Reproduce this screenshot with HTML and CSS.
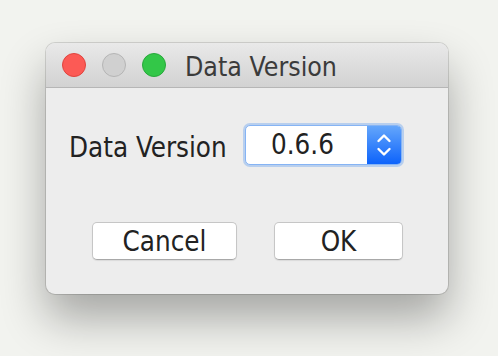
FILE: index.html
```html
<!DOCTYPE html>
<html lang="en">
<head>
  <meta charset="UTF-8" />
  <title>Data Version</title>
  <link rel="stylesheet" href="styles.css">
</head>
<body>
  <div class="window">
    <div class="titlebar">
      <span class="light red"></span>
      <span class="light gray"></span>
      <span class="light green"></span>
      <span class="title">Data Version</span>
    </div>
    <div class="content">
      <div class="row">
        <label class="field-label">Data Version</label>
        <div class="select">
          <span class="select-value">0.6.6</span>
          <span class="stepper">
            <svg width="18" height="28" viewBox="0 0 18 28">
              <path d="M3.5 10 L9 4.5 L14.5 10" fill="none" stroke="#fff" stroke-width="2.4" stroke-linecap="round" stroke-linejoin="round"/>
              <path d="M3.5 18 L9 23.5 L14.5 18" fill="none" stroke="#fff" stroke-width="2.4" stroke-linecap="round" stroke-linejoin="round"/>
            </svg>
          </span>
        </div>
      </div>
      <div class="buttons">
        <button class="btn cancel">Cancel</button>
        <button class="btn ok">OK</button>
      </div>
    </div>
  </div>
</body>
</html>
```

FILE: styles.css
```css
body {
  margin: 0;
  height: 356px;
  background: #f2f3ef;
  font-family: 'DejaVu Sans Condensed', 'DejaVu Sans', sans-serif;
  color: #222;
  overflow: hidden;
}

.window {
  margin: 43px 0 0 46px;
  width: 402px;
  height: 251px;
  background: #ededed;
  border-radius: 9px;
  box-shadow: 0 0 0 1px rgba(0,0,0,0.13), 0 24px 45px rgba(0,0,0,0.32);
  overflow: hidden;
  display: flex;
  flex-direction: column;
}

.titlebar {
  height: 45px;
  background: linear-gradient(#e9e9e9, #d2d2d2);
  border-bottom: 1px solid #b6b6b6;
  display: flex;
  align-items: center;
  padding-left: 16px;
  box-sizing: border-box;
}

.light {
  width: 24px;
  height: 24px;
  border-radius: 50%;
  margin-right: 16px;
  box-sizing: border-box;
}

.red {
  background: #fc5a55;
  border: 1px solid #e0443e;
}

.gray {
  background: #d0d0d0;
  border: 1px solid #b5b5b5;
}

.green {
  background: #33c748;
  border: 1px solid #28a83b;
}

.title {
  margin-left: 3px;
  padding-top: 3px;
  font-size: 26.5px;
  color: #3b3b3b;
}

.content {
  flex: 1;
  padding: 37px 0 0 23px;
}

.row {
  display: flex;
  align-items: flex-start;
}

.field-label {
  font-size: 27.5px;
  line-height: 40px;
  margin-top: 2px;
  width: 176px;
}

.select {
  width: 157px;
  height: 40px;
  box-sizing: border-box;
  border: 1px solid #86b4f4;
  box-shadow: 0 0 0 2px rgba(120,170,240,0.45);
  border-radius: 5px;
  background: #fff;
  display: flex;
  overflow: hidden;
}

.select-value {
  flex: 1;
  text-align: center;
  font-size: 27.5px;
  line-height: 36px;
  padding-right: 8px;
}

.stepper {
  width: 34px;
  background: linear-gradient(#64a6fb, #0d63fb);
  display: flex;
  align-items: center;
  justify-content: center;
}

.buttons {
  display: flex;
  margin: 55px 0 0 23px;
  gap: 37px;
}

.btn {
  height: 38px;
  font-family: 'DejaVu Sans Condensed', 'DejaVu Sans', sans-serif;
  font-size: 27.5px;
  line-height: 36px;
  color: #222;
  background: #fff;
  border: 1px solid #c6c6c6;
  border-bottom-color: #a8a8a8;
  border-radius: 5px;
  box-shadow: 0 1px 1px rgba(0,0,0,0.08);
  padding: 0;
}

.cancel {
  width: 145px;
}

.ok {
  width: 129px;
}
```
